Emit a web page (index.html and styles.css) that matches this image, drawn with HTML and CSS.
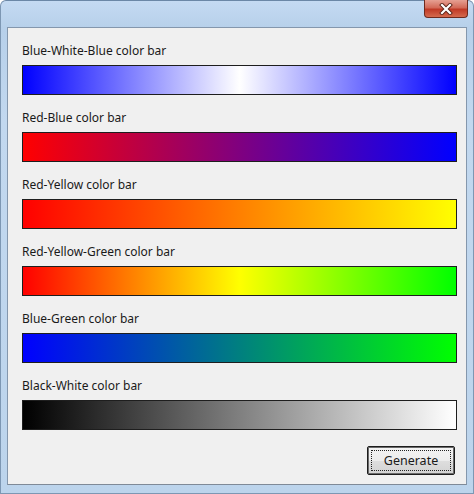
FILE: index.html
```html
<!DOCTYPE html>
<html lang="en">

<head>
    <meta charset="UTF-8">
    <meta name="viewport" content="width=device-width, initial-scale=1.0">
    <title>Color bars</title>
    <link rel="stylesheet" href="styles.css">
</head>

<body>

    <div class="window">

        <div class="titlebar">
            <div class="close">
                <svg width="16" height="12" viewBox="0 0 16 12">
                    <path d="M4 2 L12 10 M12 2 L4 10" stroke="#5a2418" stroke-width="4" stroke-linecap="square" fill="none"/>
                    <path d="M4 2 L12 10 M12 2 L4 10" stroke="#ffffff" stroke-width="2.2" stroke-linecap="square" fill="none"/>
                </svg>
            </div>
        </div>

        <div class="client">
            <div class="group">
                <div class="label">Blue-White-Blue color bar</div>
                <div class="bar bar-bwb"></div>
            </div>
            <div class="group">
                <div class="label">Red-Blue color bar</div>
                <div class="bar bar-rb"></div>
            </div>
            <div class="group">
                <div class="label">Red-Yellow color bar</div>
                <div class="bar bar-ry"></div>
            </div>
            <div class="group">
                <div class="label">Red-Yellow-Green color bar</div>
                <div class="bar bar-ryg"></div>
            </div>
            <div class="group">
                <div class="label">Blue-Green color bar</div>
                <div class="bar bar-bg"></div>
            </div>
            <div class="group">
                <div class="label">Black-White color bar</div>
                <div class="bar bar-bw"></div>
            </div>

            <div class="actions">
                <button class="button">Generate</button>
            </div>
        </div>

    </div>

</body>

</html>
```

FILE: styles.css
```css
* {
    margin: 0px;
    box-sizing: border-box;
}

body {
    font-family: 'Noto Sans', 'DejaVu Sans', sans-serif;
    font-size: 12px;
    color: #1a1a1a;
    background-color: #ffffff;
}

.window {
    width: 474px;
    height: 494px;
    padding: 0 6px 8px 6px;
    background: linear-gradient(to bottom, #c4daf2 0px, #b7d0ea 27px, #c2d8ef 120px, #bcd4ec 494px);
    border-radius: 6px 6px 0 0;
    border: 1px solid #7d97b3;
    border-top-color: #6b87a6;
}

.titlebar {
    height: 26px;
    display: flex;
    justify-content: flex-end;
    align-items: flex-start;
    margin-right: -1px;
}

.close {
    width: 44px;
    height: 18px;
    margin-top: -1px;
    border: 1px solid #6e2a1e;
    border-top: none;
    border-radius: 0 0 4px 4px;
    background: linear-gradient(to bottom, #e6a092 0%, #d36a58 45%, #c03a26 55%, #d46a4e 100%);
    display: flex;
    align-items: center;
    justify-content: center;
}

.client {
    height: 458px;
    background-color: #f0f0f0;
    border: 1px solid #8497ad;
    border-bottom-color: #7f8a97;
    padding: 15px 9px 0 14px;
    display: flex;
    flex-direction: column;
    gap: 15px;
}

.label {
    height: 16px;
    line-height: 16px;
    margin-bottom: 6px;
}

.bar {
    height: 30px;
    border: 1px solid #1e1e1e;
}

.bar-bwb {
    background: linear-gradient(to right, #0000ff, #ffffff, #0000ff);
}

.bar-rb {
    background: linear-gradient(to right, #ff0000, #0000ff);
}

.bar-ry {
    background: linear-gradient(to right, #ff0000, #ffff00);
}

.bar-ryg {
    background: linear-gradient(to right, #ff0000, #ffff00, #00ff00);
}

.bar-bg {
    background: linear-gradient(to right, #0000ff, #00ff00);
}

.bar-bw {
    background: linear-gradient(to right, #000000, #ffffff);
}

.actions {
    display: flex;
    justify-content: flex-end;
    margin-top: 1px;
    padding-right: 2px;
}

.button {
    width: 88px;
    height: 29px;
    font-family: 'Noto Sans', 'DejaVu Sans', sans-serif;
    font-size: 12.5px;
    color: #1a1a1a;
    border: 1px solid #1c1c1c;
    box-shadow: inset 0 0 0 1px #6a6a6a;
    border-radius: 2px;
    background: linear-gradient(to bottom, #f4f4f4 0%, #ececec 50%, #dedede 51%, #d2d2d2 100%);
    outline: 1px dotted #222;
    outline-offset: -5px;
}
```
